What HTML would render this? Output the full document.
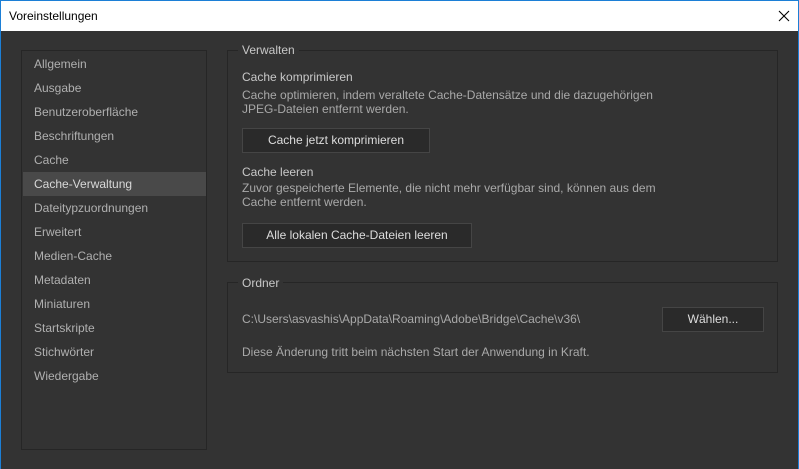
<!DOCTYPE html>
<html><head><meta charset="utf-8"><style>
*{margin:0;padding:0;box-sizing:border-box}
body{width:799px;height:469px;overflow:hidden;background:#333;font-family:"Liberation Sans",sans-serif;font-size:12px;color:#c8c8c8;position:relative}
.win{position:absolute;left:0;top:0;width:799px;height:469px;border:1px solid #1c7fd6;border-bottom:none;background:#333}
.title{position:absolute;left:0;top:0;width:797px;height:30px;background:#fff;color:#000;font-size:12px}
.title span{position:absolute;left:8px;top:8px}
.x{position:absolute;left:776px;top:8px}
.t{position:absolute;white-space:nowrap;line-height:14px}
.d{color:#a9a9a9}
.side{position:absolute;left:21px;top:50px;width:186px;height:400px;border:1px solid #262626}
.side .i{position:absolute;left:12px;color:#b0b0b0;line-height:14px}
.side .sel{position:absolute;left:1px;top:121px;width:183px;height:24px;background:#494949}
.grp{position:absolute;border:1px solid #262626}
.lg{position:absolute;background:#333;padding:0 4px;color:#c8c8c8;line-height:14px}
.btn{position:absolute;background:#2a2a2a;border:1px solid #454545;color:#ddd;text-align:center;line-height:22px}
</style></head><body>
<div class="win">
<div class="title"><span>Voreinstellungen</span>
<svg class="x" width="14" height="14" viewBox="0 0 14 14"><path d="M2 2L12 12M12 2L2 12" stroke="#000" stroke-width="1.1"/></svg></div>
</div>
<div class="side">
<div class="sel"></div>
<div class="i" style="top:6px">Allgemein</div>
<div class="i" style="top:30px">Ausgabe</div>
<div class="i" style="top:54px">Benutzeroberfläche</div>
<div class="i" style="top:78px">Beschriftungen</div>
<div class="i" style="top:102px">Cache</div>
<div class="i" style="top:126px;color:#d8d8d8">Cache-Verwaltung</div>
<div class="i" style="top:150px">Dateitypzuordnungen</div>
<div class="i" style="top:174px">Erweitert</div>
<div class="i" style="top:198px">Medien-Cache</div>
<div class="i" style="top:222px">Metadaten</div>
<div class="i" style="top:246px">Miniaturen</div>
<div class="i" style="top:270px">Startskripte</div>
<div class="i" style="top:294px">Stichwörter</div>
<div class="i" style="top:318px">Wiedergabe</div>
</div>
<div class="grp" style="left:227px;top:50px;width:551px;height:212px"></div>
<div class="lg" style="left:238px;top:43px">Verwalten</div>
<div class="t" style="left:242px;top:70px">Cache komprimieren</div>
<div class="t d" style="left:242px;top:88px">Cache optimieren, indem veraltete Cache-Datensätze und die dazugehörigen</div>
<div class="t d" style="left:242px;top:102px">JPEG-Dateien entfernt werden.</div>
<div class="btn" style="left:242px;top:128px;width:188px;height:25px">Cache jetzt komprimieren</div>
<div class="t" style="left:242px;top:165px">Cache leeren</div>
<div class="t d" style="left:242px;top:181px">Zuvor gespeicherte Elemente, die nicht mehr verfügbar sind, können aus dem</div>
<div class="t d" style="left:242px;top:195px">Cache entfernt werden.</div>
<div class="btn" style="left:242px;top:223px;width:230px;height:25px">Alle lokalen Cache-Dateien leeren</div>
<div class="grp" style="left:227px;top:282px;width:551px;height:91px"></div>
<div class="lg" style="left:238px;top:276px">Ordner</div>
<div class="t d" style="left:242px;top:312px">C:\Users\asvashis\AppData\Roaming\Adobe\Bridge\Cache\v36\</div>
<div class="btn" style="left:662px;top:307px;width:102px;height:25px">Wählen...</div>
<div class="t d" style="left:242px;top:345px">Diese Änderung tritt beim nächsten Start der Anwendung in Kraft.</div>
</body></html>
